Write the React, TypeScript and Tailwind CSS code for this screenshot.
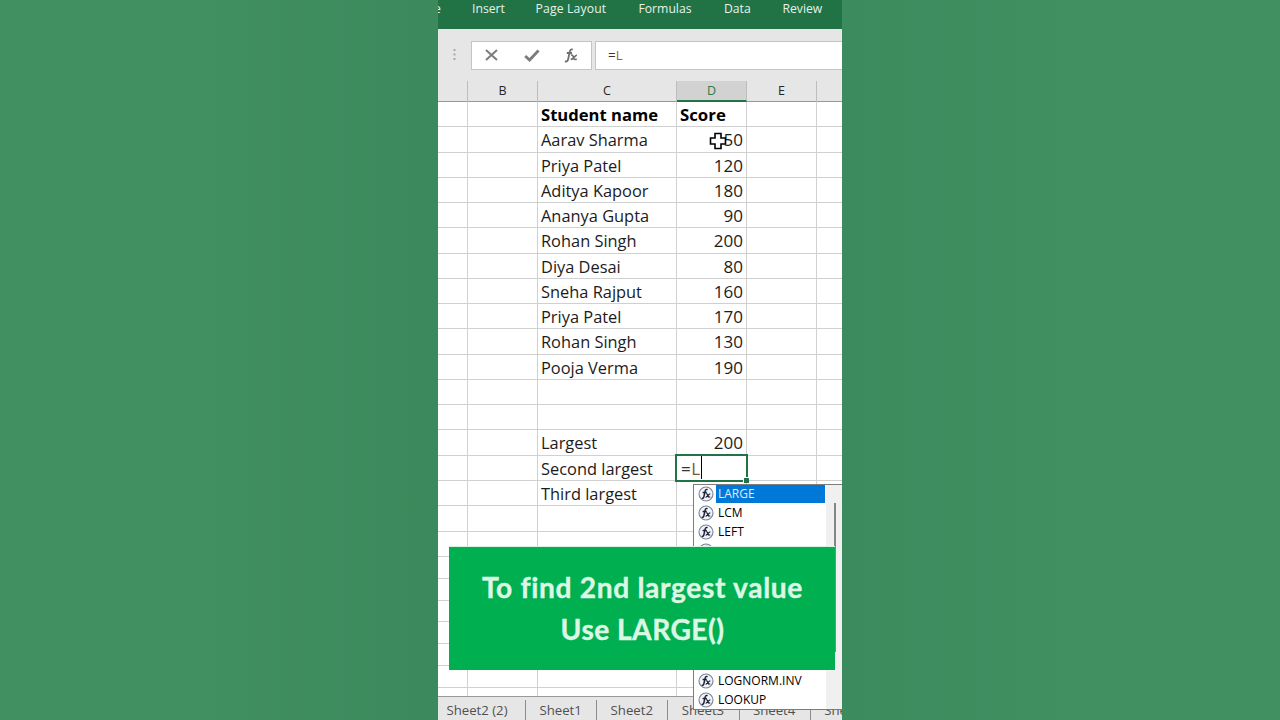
import React from "react";

const students: [string, string][] = [
  ["Aarav Sharma", "150"],
  ["Priya Patel", "120"],
  ["Aditya Kapoor", "180"],
  ["Ananya Gupta", "90"],
  ["Rohan Singh", "200"],
  ["Diya Desai", "80"],
  ["Sneha Rajput", "160"],
  ["Priya Patel", "170"],
  ["Rohan Singh", "130"],
  ["Pooja Verma", "190"],
  ["", ""],
  ["", ""],
  ["Largest", "200"],
  ["Second largest", ""],
  ["Third largest", ""],
  ["", ""],
  ["", ""],
];

function Row({ name, score, bold = false, short = false }: { name: string; score: string; bold?: boolean; short?: boolean }) {
  return (
    <div
      className={`grid w-[404px] shrink-0 grid-cols-[30px_70px_139px_70px_70px_26px] text-[16.4px] text-[#1c1c1c] ${
        short ? "h-[21.9px]" : "h-[25.28px]"
      } [&>div]:border-r [&>div]:border-b [&>div]:border-[#d0d0d0] [&>div]:leading-[25px]`}
    >
      <div />
      <div />
      <div className={`h-full min-h-0 pl-[3px] whitespace-nowrap ${bold ? "text-[16.6px] font-bold text-black" : ""}`}>{name}</div>
      <div className={`h-full min-h-0 whitespace-nowrap ${bold ? "pl-[3px] text-[16.8px] font-bold text-black" : "pr-[3px] text-right text-[17px]"}`}>{score}</div>
      <div />
      <div />
    </div>
  );
}

function FxBadge() {
  return (
    <svg width="16" height="16" viewBox="0 0 16 16" className="shrink-0">
      <circle cx="8" cy="8" r="7" fill="#f1f3fa" stroke="#7b8294" strokeWidth="1.1" />
      <path d="M9.6 3.7C8 2.9 7.3 4.1 7 5.6L5.9 10.6C5.6 12.2 4.9 12.6 3.7 12.1M4.6 6.4H8.8" fill="none" stroke="#1d2233" strokeWidth="1.5" />
      <path d="M8 8C9.3 7.4 9.6 8.6 10 9.7C10.4 11 10.8 11.5 12.2 10.7M12.3 7.9C10.8 7.7 9.3 11.5 7.6 11.1" fill="none" stroke="#1d2233" strokeWidth="1.3" />
    </svg>
  );
}

function FunctionItem({ name, selected = false }: { name?: string; selected?: boolean }) {
  return (
    <div className="flex h-[18.72px] shrink-0 items-center gap-[2px] pl-[4px]">
      <FxBadge />
      <span className={`h-[18px] flex-1 pl-[2px] leading-[18px] ${selected ? "bg-[#0078d7] text-[#dcecfa]" : ""}`}>{name}</span>
    </div>
  );
}

export default function App() {
  return (
    <div className="flex h-[720px] w-[1280px] overflow-hidden bg-[#408e61] font-['Open_Sans','Noto_Sans',sans-serif]">
      <div className="w-[438px] shrink-0 bg-linear-to-r from-[#419062] from-40% to-[#3b895c]" />
      <main className="relative flex w-[404px] shrink-0 flex-col overflow-hidden bg-white">
        <nav className="h-[29px] shrink-0 bg-[#217346] text-[12.2px] leading-[18px] whitespace-nowrap text-[#e6f2ea]">
          <div className="-ml-[4px] flex">
            <span className="w-[38px]">e</span>
            <span className="w-[63.5px]">Insert</span>
            <span className="w-[103px] tracking-[0.15px]">Page Layout</span>
            <span className="w-[85.5px]">Formulas</span>
            <span className="w-[58.5px]">Data</span>
            <span>Review</span>
          </div>
        </nav>
        <div className="flex h-[52px] shrink-0 bg-[#e6e6e6] pt-[12px]">
          <div className="flex w-[33px] justify-center pt-[8px]">
            <svg width="3" height="12" viewBox="0 0 3 12" fill="#a8a8a8">
              <rect x="0.5" y="0" width="2" height="2" />
              <rect x="0.5" y="4.5" width="2" height="2" />
              <rect x="0.5" y="9" width="2" height="2" />
            </svg>
          </div>
          <div className="flex h-[29px] w-[121px] items-center border border-[#c4c4c4] bg-white pb-px pl-[13px]">
            <svg width="13" height="12" viewBox="0 0 13 12" fill="none" stroke="#7c7c7c" strokeWidth="2">
              <path d="M1 1L12 11M12 1L1 11" />
            </svg>
            <svg width="16" height="13" viewBox="0 0 16 13" fill="none" stroke="#7c7c7c" strokeWidth="2.9" className="ml-[26px]">
              <path d="M1.2 7L5.6 11L14.5 1.5" />
            </svg>
            <svg width="15" height="15" viewBox="0 0 15 15" fill="none" stroke="#707070" className="ml-[23.5px]">
              <path d="M8.8 1.6C6.8 .6 6 2.5 5.6 4.3L4.2 11C3.7 13.3 2.6 14 1 13.1M2.8 5H8" strokeWidth="1.8" />
              <path d="M7 7.3C8.8 6.5 9.1 8.3 9.6 9.7C10.1 11.4 10.9 12 12.7 11M13 7.2C11 6.8 9.2 11.9 6.7 11.3" strokeWidth="1.6" />
            </svg>
          </div>
          <div className="ml-[3px] h-[29px] flex-1 border border-r-0 border-[#c4c4c4] bg-white pl-[12px] text-[13.4px] leading-[26px] text-[#333]">
            =<span className="text-[#b5562f]">L</span>
          </div>
        </div>
        <div className="grid h-[21px] shrink-0 grid-cols-[30px_70px_139px_70px_70px_26px] border-b border-[#999] bg-[#e6e6e6] text-center text-[12.5px] leading-[20px] text-[#262626] [&>div]:border-r [&>div]:border-[#bdbdbd]">
          <div />
          <div>B</div>
          <div>C</div>
          <div className="h-[21px] border-b-2 border-b-[#217346]! bg-[#d2d2d2] text-[#2f7a4b]">D</div>
          <div>E</div>
          <div />
        </div>
        <div className="flex h-[594px] shrink-0 flex-col overflow-hidden">
          <Row name="Student name" score="Score" bold />
          {students.map(([n, s], i) => (
            <Row key={i} name={n} score={s} />
          ))}
          {[0, 1, 2, 3, 4, 5, 6].map((i) => (
            <Row key={i} name="" score="" short />
          ))}
        </div>
        <footer className="flex h-[24px] shrink-0 border-t border-[#999] bg-[#e6e6e6] text-[13.2px] whitespace-nowrap text-[#505050]">
          {["Sheet2 (2)", "Sheet1", "Sheet2", "Sheet3", "Sheet4", "Sheet5"].map((s, i) => (
            <div key={s} className={`mt-[3px] shrink-0 border-r border-[#8c8c8c] text-center leading-[20px] ${i === 0 ? "w-[88px] pr-[9px]" : "w-[71.2px] pr-px"}`}>
              {s}
            </div>
          ))}
        </footer>

        <div className="absolute top-[454px] left-[237px] h-[28px] w-[73px] border-2 border-[#217346] bg-white pl-[4px] text-[17px] leading-[25px] text-[#333]">
          <span className="inline-block h-[23px] border-r border-black pr-px leading-[25px] tracking-[0.4px]">=<span className="text-[#7a5a2a]">L</span></span>
          <div className="absolute -right-[3px] -bottom-[3px] h-[6px] w-[6px] border-t border-l border-white bg-[#217346]" />
        </div>

        <svg width="18" height="18" viewBox="0 0 18 18" className="absolute top-[132px] left-[271px]">
          <path d="M6 1.5H12V6H16.5V12H12V16.5H6V12H1.5V6H6Z" fill="white" stroke="black" strokeWidth="1.6" />
        </svg>

        <div className="absolute top-[484px] left-[255px] flex h-[226px] w-[160px] border border-[#7d7d7d] bg-white">
          <div className="flex w-[131px] flex-col text-[12px] text-black">
            <FunctionItem name="LARGE" selected />
            <FunctionItem name="LCM" />
            <FunctionItem name="LEFT" />
            <FunctionItem />
            <div className="h-[111.8px] shrink-0" />
            <FunctionItem name="LOGNORM.INV" />
            <FunctionItem name="LOOKUP" />
          </div>
          <div className="ml-px flex-1 bg-[#f0f0f0] pt-[18px] pl-[8px]">
            <div className="h-[149px] w-[2px] bg-[#858585]" />
          </div>
        </div>

        <div className="absolute top-[546px] left-[11px] h-[124px] w-[386px] border-t border-[#d9f3e3] bg-[#00af50] pt-[19px] text-center font-['Lato',sans-serif] text-[28.2px] leading-[42px] font-bold whitespace-nowrap text-[#dcf8e4]">
          <div className="pl-px tracking-[0.65px] [-webkit-text-stroke:0.4px_#dcf8e4]">To find 2nd largest value</div>
          <div className="pl-px tracking-[0.45px] [-webkit-text-stroke:0.4px_#dcf8e4]">Use LARGE()</div>
        </div>
      </main>
      <div className="flex-1 bg-linear-to-r from-[#3c8b5e] to-[#419062] to-60%" />
    </div>
  );
}
